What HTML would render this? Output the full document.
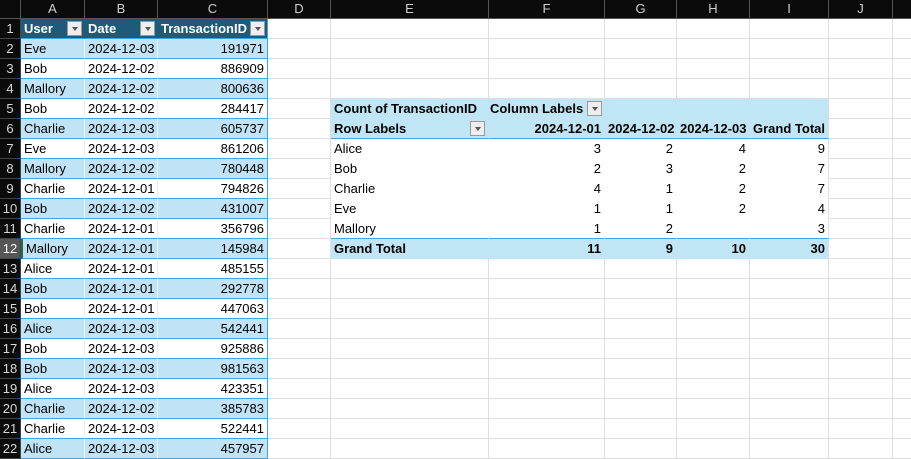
<!DOCTYPE html>
<html><head><meta charset="utf-8"><style>
*{margin:0;padding:0;box-sizing:border-box}
body{width:911px;height:457px;overflow:hidden;background:#fff;font-family:"Liberation Sans",Arial,sans-serif;font-size:13px;color:#000}
.g{display:grid;grid-template-columns:21px 64px 73px 110px 63px 158px 116px 72px 73px 79px 64px 30px;grid-auto-rows:20px;grid-template-rows:19px;width:943px}
.g>div{border-right:1px solid #dedede;border-bottom:1px solid #dedede;padding:0 3px;white-space:nowrap;overflow:hidden;line-height:19px;position:relative}
.g>.h{background:#0b0b0b;color:#cfcfcf;text-align:center;border-color:#555;line-height:18px}
.g>.n{background:#0b0b0b;color:#d8d8d8;text-align:center;border-color:#444;padding:0}
.g>.sel{background:#555;color:#fff}
.r{text-align:right}
.g>.t{background:#1e5a7a;color:#fff;font-weight:bold;border-bottom-color:#4aa3d6;border-right-color:#1e5a7a}
.g>.b{background:#c0e4f5;border-bottom-color:#4aa3d6;border-right-color:#e8f5fb}
.g>.w{background:#fff;border-bottom-color:#4aa3d6;border-right-color:#eee}
.g>.c{border-right-color:#4aa3d6}
.dd{position:absolute;right:2px;top:2px;width:15px;height:15px;background:#eee;border:1px solid #999}
.dd:after{content:"";position:absolute;left:4px;top:5px;border-left:3px solid transparent;border-right:3px solid transparent;border-top:4px solid #555}
.g>.p{background:#c0e6f5;border-color:#c0e6f5;font-weight:bold}
.g>.pb{border-bottom-color:#4aa3d6}
.g>.q{border-color:#fff}
.g>.qb{border-bottom-color:#4aa3d6}
.g>.e{border-right-color:#dedede}
</style></head><body>
<div class="g">
<div class="h"></div><div class="h">A</div><div class="h">B</div><div class="h">C</div><div class="h">D</div><div class="h">E</div><div class="h">F</div><div class="h">G</div><div class="h">H</div><div class="h">I</div><div class="h">J</div><div class="h"></div>

<div class="n">1</div><div class="t">User<span class="dd"></span></div><div class="t">Date<span class="dd"></span></div><div class="t c">TransactionID<span class="dd"></span></div><div></div><div></div><div></div><div></div><div></div><div></div><div></div><div></div>
<div class="n">2</div><div class="b">Eve</div><div class="b">2024-12-03</div><div class="b r c">191971</div><div></div><div></div><div></div><div></div><div></div><div></div><div></div><div></div>
<div class="n">3</div><div class="w">Bob</div><div class="w">2024-12-02</div><div class="w r c">886909</div><div></div><div></div><div></div><div></div><div></div><div></div><div></div><div></div>
<div class="n">4</div><div class="b">Mallory</div><div class="b">2024-12-02</div><div class="b r c">800636</div><div></div><div></div><div></div><div></div><div></div><div></div><div></div><div></div>
<div class="n">5</div><div class="w">Bob</div><div class="w">2024-12-02</div><div class="w r c">284417</div><div></div><div class="p">Count of TransactionID</div><div class="p" style="padding-left:1px">Column Labels<span class="dd"></span></div><div class="p"></div><div class="p"></div><div class="p e"></div><div></div><div></div>
<div class="n">6</div><div class="b">Charlie</div><div class="b">2024-12-03</div><div class="b r c">605737</div><div></div><div class="p pb">Row Labels<span class="dd" style="right:3px"></span></div><div class="p pb r">2024-12-01</div><div class="p pb r">2024-12-02</div><div class="p pb r">2024-12-03</div><div class="p pb r e">Grand Total</div><div></div><div></div>
<div class="n">7</div><div class="w">Eve</div><div class="w">2024-12-03</div><div class="w r c">861206</div><div></div><div class="q">Alice</div><div class="q r">3</div><div class="q r">2</div><div class="q r">4</div><div class="q r e">9</div><div></div><div></div>
<div class="n">8</div><div class="b">Mallory</div><div class="b">2024-12-02</div><div class="b r c">780448</div><div></div><div class="q">Bob</div><div class="q r">2</div><div class="q r">3</div><div class="q r">2</div><div class="q r e">7</div><div></div><div></div>
<div class="n">9</div><div class="w">Charlie</div><div class="w">2024-12-01</div><div class="w r c">794826</div><div></div><div class="q">Charlie</div><div class="q r">4</div><div class="q r">1</div><div class="q r">2</div><div class="q r e">7</div><div></div><div></div>
<div class="n">10</div><div class="b">Bob</div><div class="b">2024-12-02</div><div class="b r c">431007</div><div></div><div class="q">Eve</div><div class="q r">1</div><div class="q r">1</div><div class="q r">2</div><div class="q r e">4</div><div></div><div></div>
<div class="n">11</div><div class="w">Charlie</div><div class="w">2024-12-01</div><div class="w r c">356796</div><div></div><div class="q qb">Mallory</div><div class="q qb r">1</div><div class="q qb r">2</div><div class="q qb"></div><div class="q qb r e">3</div><div></div><div></div>
<div class="n sel">12</div><div class="b" style="border-left:2px solid #1e7145">Mallory</div><div class="b">2024-12-01</div><div class="b r c">145984</div><div></div><div class="p">Grand Total</div><div class="p r">11</div><div class="p r">9</div><div class="p r">10</div><div class="p r e">30</div><div></div><div></div>
<div class="n">13</div><div class="w">Alice</div><div class="w">2024-12-01</div><div class="w r c">485155</div><div></div><div></div><div></div><div></div><div></div><div></div><div></div><div></div>
<div class="n">14</div><div class="b">Bob</div><div class="b">2024-12-01</div><div class="b r c">292778</div><div></div><div></div><div></div><div></div><div></div><div></div><div></div><div></div>
<div class="n">15</div><div class="w">Bob</div><div class="w">2024-12-01</div><div class="w r c">447063</div><div></div><div></div><div></div><div></div><div></div><div></div><div></div><div></div>
<div class="n">16</div><div class="b">Alice</div><div class="b">2024-12-03</div><div class="b r c">542441</div><div></div><div></div><div></div><div></div><div></div><div></div><div></div><div></div>
<div class="n">17</div><div class="w">Bob</div><div class="w">2024-12-03</div><div class="w r c">925886</div><div></div><div></div><div></div><div></div><div></div><div></div><div></div><div></div>
<div class="n">18</div><div class="b">Bob</div><div class="b">2024-12-03</div><div class="b r c">981563</div><div></div><div></div><div></div><div></div><div></div><div></div><div></div><div></div>
<div class="n">19</div><div class="w">Alice</div><div class="w">2024-12-03</div><div class="w r c">423351</div><div></div><div></div><div></div><div></div><div></div><div></div><div></div><div></div>
<div class="n">20</div><div class="b">Charlie</div><div class="b">2024-12-02</div><div class="b r c">385783</div><div></div><div></div><div></div><div></div><div></div><div></div><div></div><div></div>
<div class="n">21</div><div class="w">Charlie</div><div class="w">2024-12-03</div><div class="w r c">522441</div><div></div><div></div><div></div><div></div><div></div><div></div><div></div><div></div>
<div class="n">22</div><div class="b">Alice</div><div class="b">2024-12-03</div><div class="b r c">457957</div><div></div><div></div><div></div><div></div><div></div><div></div><div></div><div></div>
</div>
</body></html>
